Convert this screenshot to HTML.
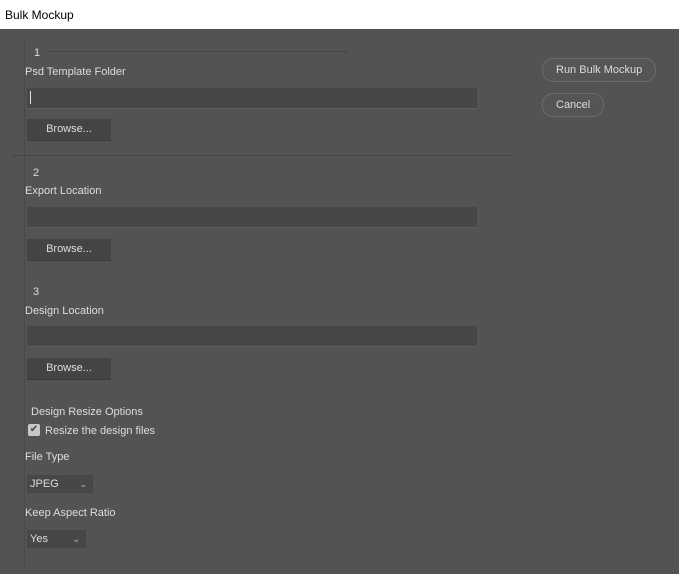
<!DOCTYPE html><html><head><style>
body{margin:0;width:679px;height:574px;background:#535353;font-family:"Liberation Sans",sans-serif;font-size:11px;color:#ddd;position:relative;overflow:hidden}
.t{position:absolute;white-space:nowrap}
.title{position:absolute;left:0;top:0;width:679px;height:29px;background:#fff;color:#000;font-size:12px}
.f{position:absolute;left:27px;width:450px;height:20px;background:#474747;border-bottom:1px solid #5e5e5e}
.b{position:absolute;left:27px;width:84px;height:21px;background:#444;color:#ddd;text-align:center;line-height:21px;box-shadow:0 1px 0 #3a3a3a}
.rb{position:absolute;border:1px solid #6c6c6c;border-radius:11px;height:22px;line-height:22px;color:#ddd;padding:0 13px;background:#555}
.sel{position:absolute;left:27px;height:18px;background:#474747;line-height:18px;padding-left:3px;color:#ddd}
.sel span{position:absolute;right:6px;top:0;font-size:9px;color:#bbb}
.line{position:absolute;height:1px;background:#444}
</style></head><body>
<div class="title"><span class="t" style="left:5px;top:8px">Bulk Mockup</span></div>
<div class="line" style="left:48px;top:51px;width:300px"></div>
<div class="line" style="left:12px;top:155px;width:500px"></div>
<div class="line" style="left:24px;top:40px;width:1px;height:530px;background:#4a4a4a"></div>
<div class="t" style="left:34px;top:47px">1</div>
<div class="t" style="left:25px;top:66px">Psd Template Folder</div>
<div class="f" style="top:88px"><div style="position:absolute;left:3px;top:3px;width:1px;height:13px;background:#ddd"></div></div>
<div class="b" style="top:119px">Browse...</div>
<div class="t" style="left:33px;top:167px">2</div>
<div class="t" style="left:25px;top:185px">Export Location</div>
<div class="f" style="top:207px"></div>
<div class="b" style="top:239px">Browse...</div>
<div class="t" style="left:33px;top:286px">3</div>
<div class="t" style="left:25px;top:305px">Design Location</div>
<div class="f" style="top:326px"></div>
<div class="b" style="top:358px">Browse...</div>
<div class="t" style="left:31px;top:406px">Design Resize Options</div>
<div style="position:absolute;left:28px;top:424px;width:12px;height:12px;background:#c8c8c8;border-radius:2px;color:#444;font-size:10px;line-height:12px;text-align:center">✔</div>
<div class="t" style="left:45px;top:425px">Resize the design files</div>
<div class="t" style="left:25px;top:451px">File Type</div>
<div class="sel" style="top:475px;width:63px">JPEG<span>⌄</span></div>
<div class="t" style="left:25px;top:507px">Keep Aspect Ratio</div>
<div class="sel" style="top:530px;width:56px">Yes<span>⌄</span></div>
<div class="rb" style="left:542px;top:58px">Run Bulk Mockup</div>
<div class="rb" style="left:542px;top:93px">Cancel</div>
</body></html>
